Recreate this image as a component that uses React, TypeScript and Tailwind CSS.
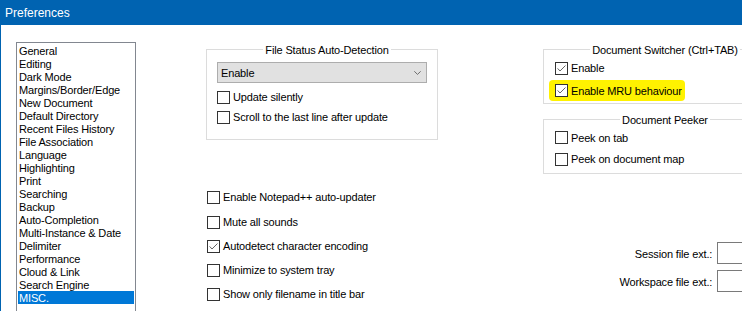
import React from "react";

const items = [
  "General",
  "Editing",
  "Dark Mode",
  "Margins/Border/Edge",
  "New Document",
  "Default Directory",
  "Recent Files History",
  "File Association",
  "Language",
  "Highlighting",
  "Print",
  "Searching",
  "Backup",
  "Auto-Completion",
  "Multi-Instance & Date",
  "Delimiter",
  "Performance",
  "Cloud & Link",
  "Search Engine",
  "MISC.",
];

function Box({ checked }: { checked?: boolean }) {
  return (
    <span className="w-[13px] h-[13px] border border-[#333333] bg-white shrink-0 flex items-center justify-center">
      {checked && (
        <svg width="11" height="11" viewBox="0 0 11 11">
          <path d="M1.6 5.4 L4 8 L9.5 2.5" stroke="#666666" strokeWidth="1" fill="none" />
        </svg>
      )}
    </span>
  );
}

function Check({ label, checked, className = "" }: { label: string; checked?: boolean; className?: string }) {
  return (
    <div className={"flex items-center gap-[3px] " + className}>
      <Box checked={checked} />
      <span className="whitespace-nowrap pt-[1px]">{label}</span>
    </div>
  );
}

export default function App() {
  return (
    <div
      className="w-[742px] h-[311px] overflow-hidden bg-white text-black text-[11px] leading-[13px] tracking-[-0.15px]"
      style={{ fontFamily: '"Liberation Sans", Arial, sans-serif' }}
    >
      <div className="h-[25px] bg-[#0063b1] text-white text-[12px] tracking-normal pl-[5px] pt-[2px] flex items-center">
        Preferences
      </div>
      <div className="flex items-start h-[286px] border-l border-[#0063b1] pl-[15px]">
        {/* list */}
        <div className="mt-[17px] w-[120px] h-[290px] shrink-0 border border-[#828790] pt-[1px]">
          {items.map((it) => (
            <div
              key={it}
              className={
                "h-[13px] leading-[15px] mx-[1px] px-[1px] whitespace-nowrap " +
                (it === "MISC." ? "bg-[#0078d7] text-white" : "")
              }
            >
              {it}
            </div>
          ))}
        </div>

        {/* middle column */}
        <div className="ml-[70px] mt-[18px] w-[232px] shrink-0">
          <fieldset className="border border-[#dcdcdc] pl-[10px] pb-[12px]">
            <legend className="mx-auto px-[2px] h-[13px] leading-[15px]">File Status Auto-Detection</legend>
            <div className="mt-[6px] w-[210px] h-[21px] bg-[#e1e1e1] border border-[#adadad] flex items-center justify-between pl-[3px] pr-[5px]">
              <span className="pt-[2px]">Enable</span>
              <svg width="7" height="4" viewBox="0 0 7 4">
                <path d="M0.3 0.3 L3.5 3.4 L6.7 0.3" stroke="#606060" strokeWidth="0.9" fill="none" />
              </svg>
            </div>
            <Check label="Update silently" className="mt-[4px] h-[20px]" />
            <Check label="Scroll to the last line after update" className="h-[20px]" />
          </fieldset>
          <div className="mt-[45px] ml-[1px]">
            <Check label="Enable Notepad++ auto-updater" className="h-[24px]" />
            <Check label="Mute all sounds" className="h-[24px] mt-[1px]" />
            <Check label="Autodetect character encoding" checked className="h-[24px]" />
            <Check label="Minimize to system tray" className="h-[24px]" />
            <Check label="Show only filename in title bar" className="h-[24px]" />
          </div>
        </div>

        {/* right column */}
        <div className="ml-[105px] mt-[18px] w-[233px] shrink-0">
          <fieldset className="border border-[#dcdcdc] pl-[11px] pb-[2px]">
            <legend className="mx-auto px-[2px] h-[13px] leading-[15px]">Document Switcher (Ctrl+TAB)</legend>
            <Check label="Enable" checked className="mt-[1px] h-[22px]" />
            <Check
              label="Enable MRU behaviour"
              checked
              className="mt-[1px] h-[21px] -ml-[6px] pl-[6px] w-[136px] bg-[#fff200] rounded-[4px]"
            />
          </fieldset>
          <fieldset className="mt-[9px] border border-[#dcdcdc] pl-[11px] pb-[3px]">
            <legend className="mx-auto px-[2px] h-[13px] leading-[15px]">Document Peeker</legend>
            <Check label="Peek on tab" className="mt-[1px] h-[21px]" />
            <Check label="Peek on document map" className="h-[22px]" />
          </fieldset>
          <div className="mt-[68px]">
            <div className="flex items-center h-[22px]">
              <span className="w-[173px] text-right whitespace-nowrap pt-[2px]">Session file ext.:</span>
              <span className="ml-[5px] w-[60px] h-[22px] border border-[#7a7a7a] bg-white" />
            </div>
            <div className="flex items-center h-[22px] mt-[6px]">
              <span className="w-[173px] text-right whitespace-nowrap pt-[2px]">Workspace file ext.:</span>
              <span className="ml-[5px] w-[60px] h-[22px] border border-[#7a7a7a] bg-white" />
            </div>
          </div>
        </div>
      </div>
    </div>
  );
}
